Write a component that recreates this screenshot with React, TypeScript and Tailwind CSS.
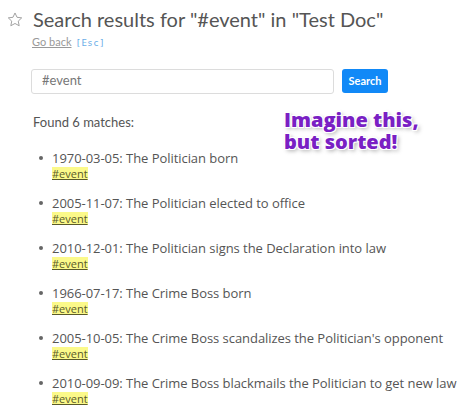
import React from "react";

const items = [
  "1970-03-05: The Politician born",
  "2005-11-07: The Politician elected to office",
  "2010-12-01: The Politician signs the Declaration into law",
  "1966-07-17: The Crime Boss born",
  "2005-10-05: The Crime Boss scandalizes the Politician's opponent",
  "2010-09-09: The Crime Boss blackmails the Politician to get new law",
];

function Star() {
  return (
    <svg width="16" height="15" viewBox="0 0 24 23" fill="none" stroke="#a0a0a0" strokeWidth="1.5" strokeLinejoin="round">
      <path d="M12 1.5l3.1 6.6 7.2.9-5.3 5 1.4 7.1L12 17.6l-6.4 3.5 1.4-7.1-5.3-5 7.2-.9z" />
    </svg>
  );
}

export default function App() {
  return (
    <div className="relative w-[474px] h-[418px] overflow-hidden bg-white text-[#444]">
      <div className="flex items-center pl-[7px] pt-[6px]">
        <Star />
        <h1 className="ml-[10px] text-[20px] leading-[26px] text-[#555] font-['Lato',sans-serif]">
          Search results for "#event" in "Test Doc"
        </h1>
      </div>
      <div className="pl-[32px] mt-[3px] flex items-baseline gap-[4px] font-['Lato',sans-serif]">
        <span className="text-[11px] leading-[14px] text-[#999] underline">Go back</span>
        <span className="text-[9px] text-[#6aaee8] font-['DejaVu_Sans_Mono',monospace] tracking-[0.5px]">[Esc]</span>
      </div>
      <div className="pl-[31px] mt-[18px] flex items-center gap-[8px]">
        <div className="w-[303px] h-[25px] border border-[#dcdcdc] rounded-[3px] flex items-center pl-[10px] text-[13px] text-[#777] font-['Lato',sans-serif]">
          #event
        </div>
        <button className="w-[46px] h-[24px] rounded-[3px] bg-[#1189f7] text-white text-[11px] font-bold font-['Lato',sans-serif]">
          Search
        </button>
      </div>
      <div className="pl-[33px] mt-[20px] text-[13px] leading-[16px] text-[#555] font-['Lato',sans-serif]">
        Found 6 matches:
      </div>
      <ul className="mt-[20px] pl-[52px] font-['Open_Sans',sans-serif] flex flex-col gap-[15px]">
        {items.map((t) => (
          <li key={t} className="relative">
            <span className="absolute left-[-13px] top-[6px] w-[4px] h-[4px] rounded-full bg-[#666]" />
            <div className="text-[13px] leading-[16px] text-[#555] tracking-[-0.05px]">{t}</div>
            <div className="mt-[1px] text-[11px] leading-[13px]">
              <span className="inline-block bg-[#fbf98a] text-[#5a5a2a] underline">#event</span>
            </div>
          </li>
        ))}
      </ul>
      <div className="absolute left-[284px] top-[109px] text-[20px] leading-[22px] font-extrabold text-[#7a1fc4] font-['Open_Sans',sans-serif] [text-shadow:0_0_1px_#fff,1px_1px_0_#fff,-1px_-1px_0_#fff,1px_-1px_0_#fff,-1px_1px_0_#fff,2px_2px_4px_rgba(0,0,0,0.35)]">
        Imagine this,
        <br />
        but sorted!
      </div>
    </div>
  );
}
